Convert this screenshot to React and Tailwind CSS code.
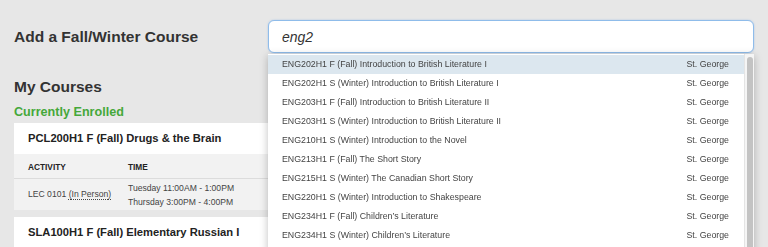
import { useState } from 'react'

const RESULTS = [
  'ENG202H1 F (Fall) Introduction to British Literature I',
  'ENG202H1 S (Winter) Introduction to British Literature I',
  'ENG203H1 F (Fall) Introduction to British Literature II',
  'ENG203H1 S (Winter) Introduction to British Literature II',
  'ENG210H1 S (Winter) Introduction to the Novel',
  'ENG213H1 F (Fall) The Short Story',
  'ENG215H1 S (Winter) The Canadian Short Story',
  'ENG220H1 S (Winter) Introduction to Shakespeare',
  'ENG234H1 F (Fall) Children\u2019s Literature',
  'ENG234H1 S (Winter) Children\u2019s Literature',
]

function CourseCard({ title, rows }) {
  return (
    <div className="bg-white">
      <div className="h-[31px] px-[14px] flex items-center text-[11.2px] font-bold text-[#222]">
        {title}
      </div>
      {rows && (
        <div className="bg-[#f2f2f2]">
          <div className="h-[25px] px-[14px] flex items-end pb-[5px] text-[8.3px] font-bold text-[#222] border-b border-[#dcdcdc]">
            <span className="w-[100px]">ACTIVITY</span>
            <span>TIME</span>
          </div>
          {rows.map((r) => (
            <div key={r.code} className="h-[31px] px-[14px] flex items-center text-[8.6px] text-[#444]">
              <span className="w-[100px]">
                {r.code}{' '}
                <span className="underline decoration-dotted underline-offset-2">({r.mode})</span>
              </span>
              <div className="leading-[14px]">
                {r.times.map((t) => (
                  <div key={t}>{t}</div>
                ))}
              </div>
            </div>
          ))}
        </div>
      )}
    </div>
  )
}

export default function App() {
  const [query, setQuery] = useState('eng2')
  const [active, setActive] = useState(0)

  return (
    <div
      className="relative h-[247px] overflow-hidden bg-[#e7e7e7] px-[14px] text-[#333]"
      style={{ fontFamily: '"Liberation Sans", Arial, sans-serif' }}
    >
      <div className="flex items-center pt-[20px]">
        <h2 className="w-[254px] text-[15.5px] font-bold text-[#333]">Add a Fall/Winter Course</h2>
        <div className="relative flex-1">
          <input
            autoFocus
            value={query}
            onChange={(e) => setQuery(e.target.value)}
            className="w-full h-[33px] rounded-[6px] border border-[#8fbcea] bg-white px-[13px] text-[14px] italic text-[#333] caret-[#333] outline-none shadow-[0_0_2px_rgba(80,150,230,0.4)]"
          />
          {/* Suggestions dropdown */}
          <div className="absolute left-0 right-0 top-[34px] z-10 h-[220px] bg-white flex shadow-[0_2px_8px_rgba(0,0,0,0.25)]">
            <ul className="flex-1 pt-px">
              {RESULTS.map((r, i) => (
                <li
                  key={r}
                  onMouseEnter={() => setActive(i)}
                  className={
                    'h-[19px] pl-[14px] pr-[15px] flex items-center justify-between text-[8.8px] text-[#444] cursor-pointer ' +
                    (i === active ? 'bg-[#dce7ef]' : '')
                  }
                >
                  <span>{r}</span>
                  <span>St. George</span>
                </li>
              ))}
            </ul>
            <div className="w-[10px] border-l border-[#e4e4e4] bg-[#f5f5f5] pt-[3px] flex justify-center">
              <div className="w-[6px] h-[260px] rounded-full bg-[#c3c3c3]" />
            </div>
          </div>
        </div>
      </div>

      <h2 className="mt-[23px] text-[15.5px] font-bold text-[#333] leading-[22px]">My Courses</h2>
      <h3 className="mt-[6px] text-[12.6px] font-bold text-[#45a83a] leading-[16px]">Currently Enrolled</h3>

      <div className="mt-[3px] flex flex-col gap-[7px]">
        <CourseCard
          title="PCL200H1 F (Fall) Drugs & the Brain"
          rows={[
            {
              code: 'LEC 0101',
              mode: 'In Person',
              times: ['Tuesday 11:00AM - 1:00PM', 'Thursday 3:00PM - 4:00PM'],
            },
          ]}
        />
        <CourseCard title="SLA100H1 F (Fall) Elementary Russian I" />
      </div>
    </div>
  )
}
